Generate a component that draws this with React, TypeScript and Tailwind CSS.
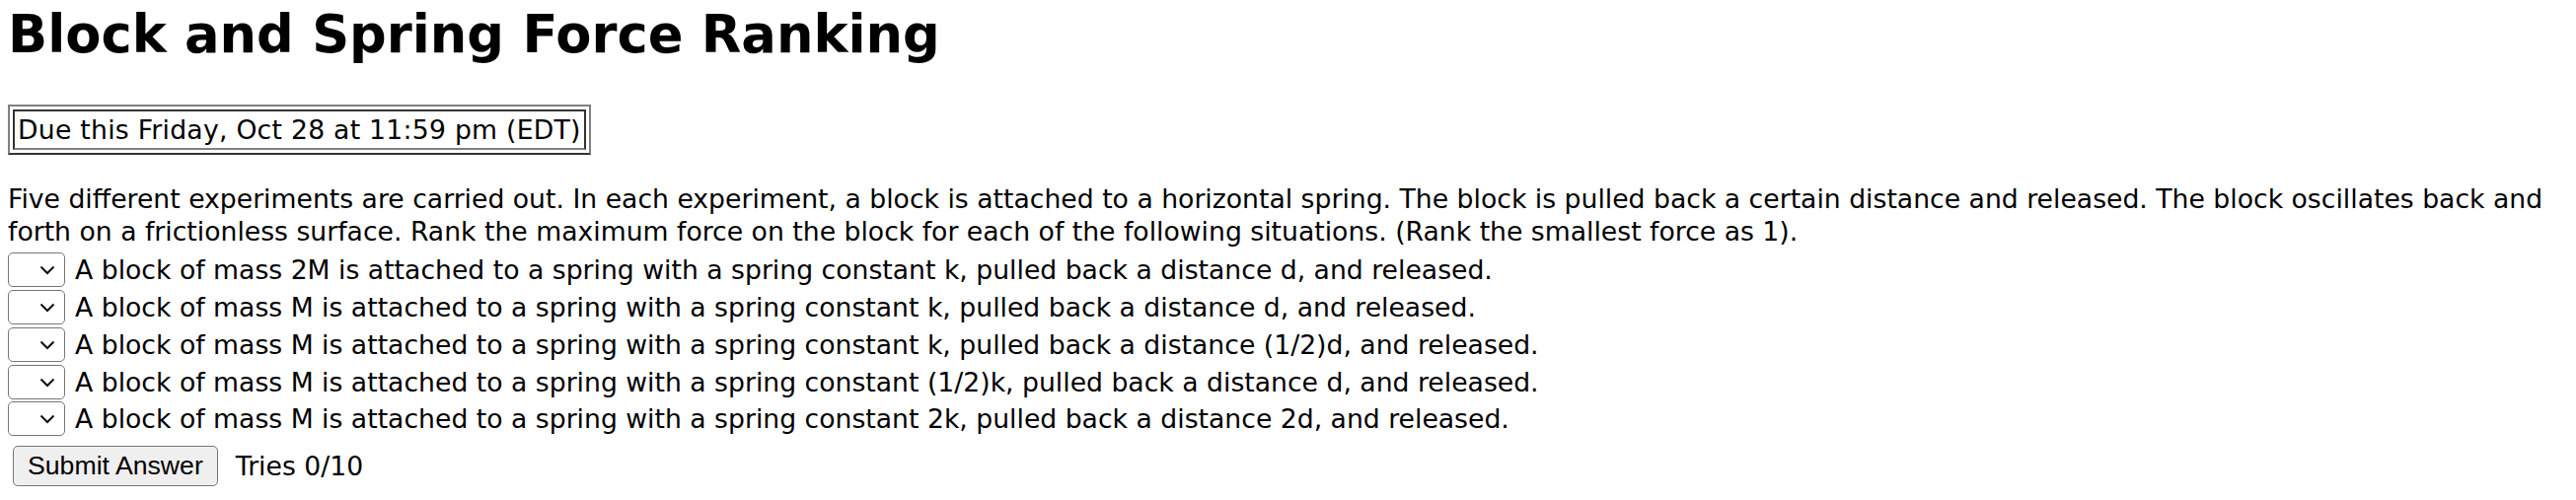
import React from "react";

const situations = [
  "A block of mass 2M is attached to a spring with a spring constant k, pulled back a distance d, and released.",
  "A block of mass M is attached to a spring with a spring constant k, pulled back a distance d, and released.",
  "A block of mass M is attached to a spring with a spring constant k, pulled back a distance (1/2)d, and released.",
  "A block of mass M is attached to a spring with a spring constant (1/2)k, pulled back a distance d, and released.",
  "A block of mass M is attached to a spring with a spring constant 2k, pulled back a distance 2d, and released.",
];

function RankSelect() {
  return (
    <div className="relative h-[35px] w-[58px] shrink-0 rounded-[5px] border-[1.5px] border-[#767676] bg-white">
      <svg
        className="absolute right-[9px] top-[12px]"
        width="16"
        height="10"
        viewBox="0 0 16 10"
        fill="none"
      >
        <path d="M1.5 1.5 L8 8 L14.5 1.5" stroke="#111" strokeWidth="2" />
      </svg>
    </div>
  );
}

export default function App() {
  return (
    <div className="min-h-screen bg-white px-2 text-black [font-family:'DejaVu_Sans',Verdana,sans-serif]">
      <h1 className="pt-1 text-[52.7px] font-bold leading-[62px]">Block and Spring Force Ranking</h1>

      <div className="mt-[40px] inline-block border-2 border-[#808080] border-b-[#333] p-[3px]">
        <div className="border-2 border-[#333] border-b-[#808080] px-[3px] py-[2px] text-[26.67px] leading-[33px] tracking-[0.25px]">
          Due this Friday, Oct 28 at 11:59 pm (EDT)
        </div>
      </div>

      <div className="mt-[28px] text-[26.67px] leading-[33px]">
        <p>
          Five different experiments are carried out. In each experiment, a block is attached to a horizontal spring. The
          block is pulled back a certain distance and released. The block oscillates back and forth on a frictionless
          surface. Rank the maximum force on the block for each of the following situations. (Rank the smallest force as
          1).
        </p>
        <div className="mt-[4px] flex flex-col">
          {situations.map((text) => (
            <div key={text} className="flex h-[37.75px] items-center gap-[10px] whitespace-nowrap">
              <RankSelect />
              <span>{text}</span>
            </div>
          ))}
        </div>
        <div className="mt-[8px] flex items-center gap-[18px] pl-[5px]">
          <button
            type="button"
            className="h-[41px] rounded-[5px] border-[1.5px] border-[#767676] bg-[#efefef] px-[14px] text-[26.67px] [font-family:'Liberation_Sans',Arial,sans-serif]"
          >
            Submit Answer
          </button>
          <span>Tries 0/10</span>
        </div>
      </div>
    </div>
  );
}
